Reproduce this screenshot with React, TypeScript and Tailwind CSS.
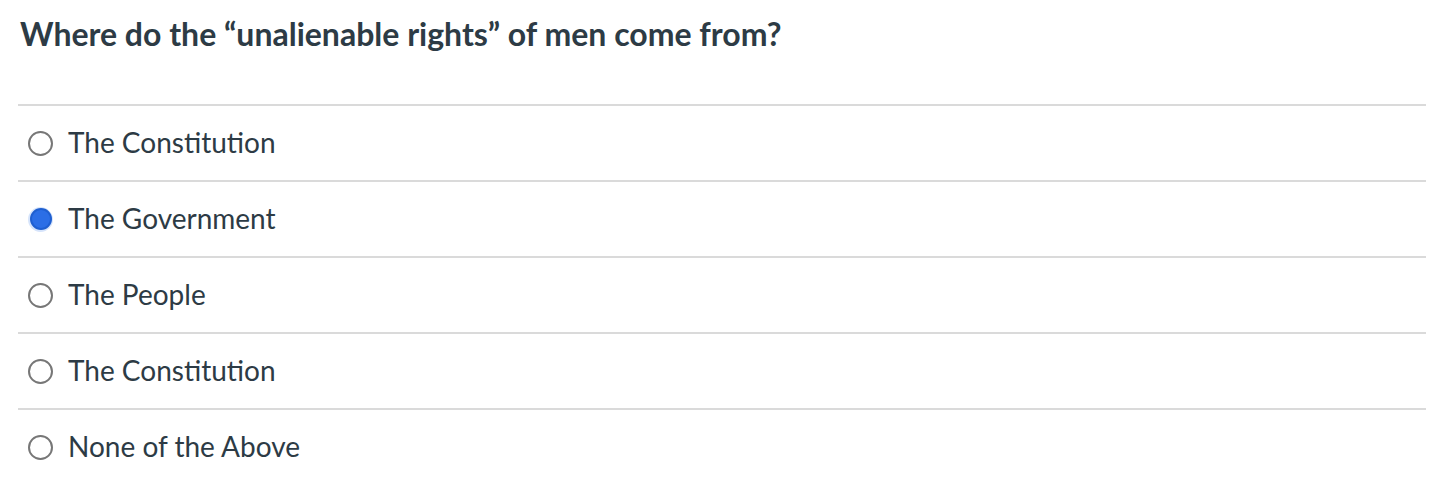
const options = [
  { label: "The Constitution", checked: false },
  { label: "The Government", checked: true },
  { label: "The People", checked: false },
  { label: "The Constitution", checked: false },
  { label: "None of the Above", checked: false },
];

function Radio({ checked }: { checked: boolean }) {
  if (checked) {
    return (
      <span className="grid h-[25px] w-[25px] shrink-0 place-items-center rounded-full bg-[#d6e4fb]">
        <span className="h-[22px] w-[22px] rounded-full border-2 border-[#1f5fd0] bg-[#2b6ee6]" />
      </span>
    );
  }
  return <span className="h-[25px] w-[25px] shrink-0 rounded-full border-2 border-[#777777] bg-white" />;
}

export default function App() {
  return (
    <div className="min-h-screen bg-white font-['Lato','Noto_Sans',sans-serif] text-[#2d3b45]">
      <div className="px-[18px]">
        <h1 className="pl-[2px] pt-[15px] text-[32px] font-bold leading-[38px]">
          Where do the “unalienable rights” of men come from?
        </h1>
        <div className="mt-[51px] w-[1408px]">
          {options.map((o, i) => (
            <label
              key={i}
              className="flex h-[76px] items-center gap-[15px] border-t-2 border-[#dadada] pl-[10px]"
            >
              <Radio checked={o.checked} />
              <span className="mb-[3px] text-[28px] leading-none">{o.label}</span>
            </label>
          ))}
        </div>
      </div>
    </div>
  );
}
